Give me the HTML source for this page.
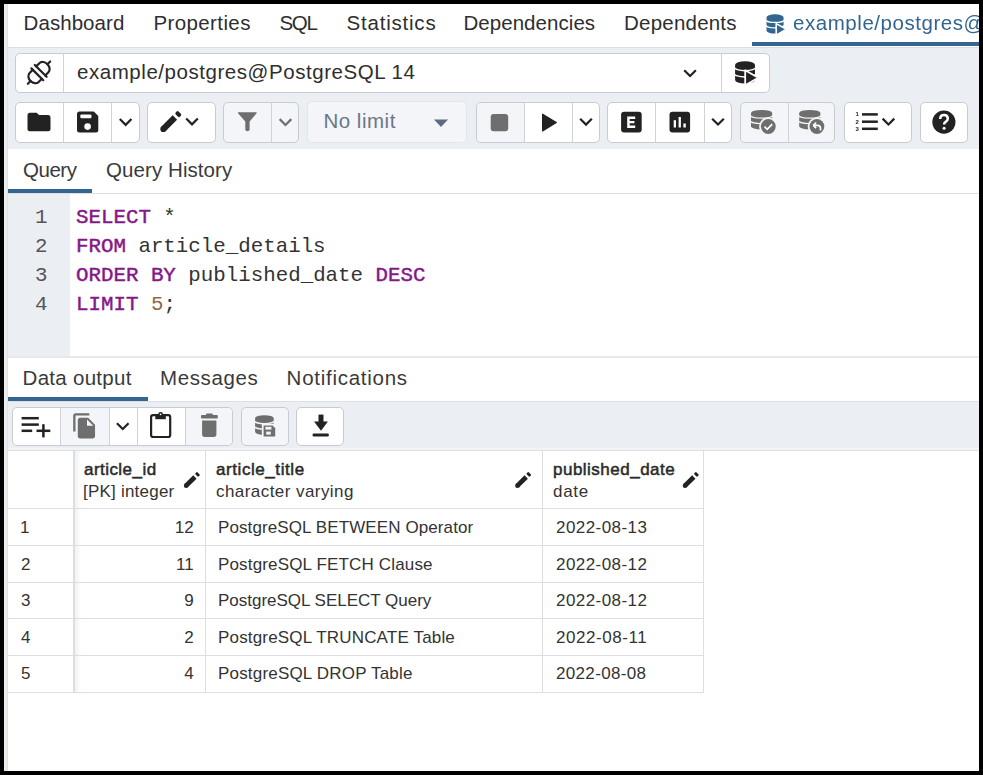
<!DOCTYPE html>
<html><head><meta charset="utf-8">
<style>
html,body{margin:0;padding:0;}
body{width:983px;height:775px;background:#000;position:relative;overflow:hidden;font-family:"Liberation Sans",sans-serif;color:#222;}
.a{position:absolute;}
.app{position:absolute;left:4px;top:4px;width:975px;height:767px;background:#fff;overflow:hidden;}
.t{position:absolute;white-space:nowrap;line-height:1;}
.hl{position:absolute;background:#dcdee2;}
.box{position:absolute;background:#fff;border:1px solid #c8cbd2;border-radius:5px;box-sizing:border-box;}
.dis{background:#f3f5f9;}
.sep{position:absolute;top:0;bottom:0;width:1px;background:#cfd2d9;}
svg{position:absolute;overflow:visible;}
.kw{color:#85178a;-webkit-text-stroke:0.45px #85178a;}
.b{font-size:17px;color:#2a2a2a;-webkit-text-stroke:0.5px #2a2a2a;}
.s{font-size:17px;color:#333;}
</style></head>
<body>
<div id="wrap" style="position:absolute;left:0;top:0;width:983px;height:775px;filter:blur(0.4px);">
<div class="app"></div>
<!-- left panel border -->
<div class="a" style="left:4px;top:4px;width:4px;height:767px;background:#eaecf0;"></div>
<div class="a" style="left:7px;top:4px;width:1px;height:767px;background:#dfe2e7;"></div>

<!-- top tab bar -->
<div class="t" id="tDash" style="left:23.6px;top:12.5px;font-size:20.5px;letter-spacing:0.05px;color:#2e2e2e;">Dashboard</div>
<div class="t" id="tProp" style="left:153.4px;top:12.5px;font-size:20.5px;letter-spacing:0.40px;color:#2e2e2e;">Properties</div>
<div class="t" id="tSql" style="left:279.4px;top:12.5px;font-size:20.5px;letter-spacing:-1.20px;color:#2e2e2e;">SQL</div>
<div class="t" id="tStat" style="left:346.6px;top:12.5px;font-size:20.5px;letter-spacing:0.78px;color:#2e2e2e;">Statistics</div>
<div class="t" id="tDep" style="left:463.4px;top:12.5px;font-size:20.5px;letter-spacing:0.06px;color:#2e2e2e;">Dependencies</div>
<div class="t" id="tDept" style="left:624.0px;top:12.5px;font-size:20.5px;letter-spacing:0.22px;color:#2e2e2e;">Dependents</div>
<div class="t" id="tEx" style="left:793.0px;top:12.5px;font-size:20.5px;color:#326690;letter-spacing:0.55px;">example/postgres@PostgreSQL 14</div>
<div class="a" style="left:752px;top:42px;width:227px;height:4px;background:#326690;"></div>
<div class="hl" style="left:8px;top:47px;width:971px;height:1px;"></div>

<!-- toolbar gray -->
<div class="a" style="left:8px;top:48px;width:971px;height:100.5px;background:#ebeef3;"></div>

<!-- connection box -->
<div class="box" style="left:15px;top:53px;width:755px;height:40px;">
  <div class="sep" style="left:47px;"></div>
  <div class="sep" style="left:705px;"></div>
</div>
<div class="t" id="tConn" style="left:77.0px;top:61.5px;font-size:20.5px;letter-spacing:0.55px;color:#2e2e2e;">example/postgres@PostgreSQL 14</div>

<!-- toolbar buttons row -->
<div class="box" style="left:15px;top:102px;width:125px;height:41px;">
  <div class="sep" style="left:47px;"></div>
  <div class="sep" style="left:95px;"></div>
</div>
<div class="box" style="left:147px;top:102px;width:69px;height:41px;"></div>
<div class="box dis" style="left:223px;top:102px;width:76px;height:41px;">
  <div class="sep" style="left:47px;"></div>
</div>
<div class="box dis" style="left:307px;top:101px;width:160px;height:42px;border-color:#e3e6eb;"></div>
<div class="t" id="tNoLim" style="left:323.4px;top:111.0px;font-size:20.5px;color:#6b7686;letter-spacing:0.52px;">No limit</div>
<div class="box" style="left:476px;top:102px;width:124px;height:41px;">
  <div class="a dis" style="left:0;top:0;width:46.5px;height:39px;border-radius:5px 0 0 5px;"></div>
  <div class="sep" style="left:46.5px;"></div>
  <div class="sep" style="left:95px;"></div>
</div>
<div class="box" style="left:607px;top:102px;width:125px;height:41px;">
  <div class="sep" style="left:47px;"></div>
  <div class="sep" style="left:96px;"></div>
</div>
<div class="box dis" style="left:740px;top:102px;width:95px;height:41px;">
  <div class="sep" style="left:47px;"></div>
</div>
<div class="box" style="left:844px;top:102px;width:68px;height:41px;"></div>
<div class="box" style="left:920px;top:102px;width:48px;height:41px;"></div>

<!-- query tabs -->
<div class="t" id="tQuery" style="left:23.0px;top:159.8px;font-size:20.5px;letter-spacing:-0.46px;color:#3a3a3a;">Query</div>
<div class="t" id="tQH" style="left:106.0px;top:159.8px;font-size:20.5px;letter-spacing:0.08px;color:#3a3a3a;">Query History</div>
<div class="a" style="left:8px;top:189px;width:84px;height:4px;background:#326690;"></div>
<div class="hl" style="left:8px;top:193px;width:971px;height:1px;"></div>

<!-- editor -->
<div class="a" style="left:8px;top:194px;width:62px;height:162px;background:#ebeef3;"></div>
<div class="a" style="left:8px;top:355.5px;width:971px;height:2px;background:#e8e9ec;"></div>

<!-- results tabs -->
<div class="t" id="tDO" style="left:22.6px;top:367.9px;font-size:20.5px;letter-spacing:0.28px;color:#3a3a3a;">Data output</div>
<div class="t" id="tMsg" style="left:160.0px;top:367.9px;font-size:20.5px;letter-spacing:0.60px;color:#3a3a3a;">Messages</div>
<div class="t" id="tNot" style="left:286.6px;top:367.9px;font-size:20.5px;letter-spacing:0.73px;color:#3a3a3a;">Notifications</div>
<div class="a" style="left:8px;top:397px;width:140px;height:4px;background:#326690;"></div>
<div class="hl" style="left:8px;top:401px;width:971px;height:1px;"></div>

<!-- results toolbar -->
<div class="a" style="left:8px;top:402px;width:971px;height:48px;background:#f2f3f6;"></div>
<div class="a" style="left:8px;top:402px;width:971px;height:46px;background:#ebeef3;"></div>
<div class="box" style="left:12px;top:407px;width:221px;height:39px;">
  <div class="a dis" style="left:47px;top:0;width:49px;height:37px;"></div>
  <div class="a dis" style="left:172px;top:0;width:47px;height:37px;border-radius:0 5px 5px 0;"></div>
  <div class="sep" style="left:47px;"></div>
  <div class="sep" style="left:96px;"></div>
  <div class="sep" style="left:123.5px;"></div>
  <div class="sep" style="left:172px;"></div>
</div>
<div class="box dis" style="left:241px;top:407px;width:48px;height:39px;"></div>
<div class="box" style="left:296px;top:407px;width:48px;height:39px;"></div>


<!-- editor text -->
<div class="a" id="edit" style="left:0;top:0;font-family:'Liberation Mono',monospace;font-size:20.8px;color:#333;">
<div class="t" style="left:35px;top:208px;color:#555;">1</div>
<div class="t" style="left:35px;top:237px;color:#555;">2</div>
<div class="t" style="left:35px;top:266px;color:#555;">3</div>
<div class="t" style="left:35px;top:295px;color:#555;">4</div>
<div class="t" id="l1" style="left:76px;top:208px;"><span class="kw">SELECT</span> *</div>
<div class="t" id="l2" style="left:76px;top:237px;"><span class="kw">FROM</span> article_details</div>
<div class="t" id="l3" style="left:76px;top:266px;"><span class="kw">ORDER</span> <span class="kw">BY</span> published_date <span class="kw">DESC</span></div>
<div class="t" id="l4" style="left:76px;top:295px;"><span class="kw">LIMIT</span> <span style="color:#91664a">5</span>;</div>
</div>

<!-- grid -->
<div class="hl" style="left:8px;top:450px;width:971px;height:1px;"></div>
<div class="a" style="left:8px;top:451px;width:696px;height:242px;">
</div>
<div class="a" style="left:75px;top:451px;width:6px;height:241px;background:linear-gradient(to right,#eff1f4,#fff);"></div>
<div class="hl" style="left:8px;top:508px;width:696px;height:1px;"></div>
<div class="hl" style="left:8px;top:545px;width:696px;height:1px;"></div>
<div class="hl" style="left:8px;top:582px;width:696px;height:1px;"></div>
<div class="hl" style="left:8px;top:618px;width:696px;height:1px;"></div>
<div class="hl" style="left:8px;top:655px;width:696px;height:1px;"></div>
<div class="hl" style="left:8px;top:692px;width:696px;height:1px;"></div>
<div class="hl" style="left:73px;top:451px;width:2px;height:242px;"></div>
<div class="hl" style="left:205px;top:451px;width:1px;height:242px;"></div>
<div class="hl" style="left:542px;top:451px;width:1px;height:242px;"></div>
<div class="hl" style="left:703px;top:451px;width:1px;height:242px;"></div>

<div class="t b" id="h1" style="left:84.0px;top:460.5px;letter-spacing:0.45px;">article_id</div>
<div class="t s" id="h1b" style="left:83.0px;top:483.3px;letter-spacing:0.22px;">[PK] integer</div>
<div class="t b" id="h2" style="left:216.0px;top:460.5px;letter-spacing:0.57px;">article_title</div>
<div class="t s" id="h2b" style="left:216.0px;top:483.3px;letter-spacing:0.44px;">character varying</div>
<div class="t b" id="h3" style="left:553.0px;top:460.5px;letter-spacing:0.49px;">published_date</div>
<div class="t s" id="h3b" style="left:553.0px;top:483.3px;letter-spacing:0.73px;">date</div>
<div class="t s" id="r0n" style="left:20.0px;top:519.0px;">1</div>
<div class="t s" id="r0i" style="right:789.4px;top:519.0px;">12</div>
<div class="t s" id="r0t" style="left:218.0px;top:519.0px;letter-spacing:0.10px;">PostgreSQL BETWEEN Operator</div>
<div class="t s" id="r0d" style="left:556.0px;top:519.0px;letter-spacing:0.44px;">2022-08-13</div>
<div class="t s" id="r1n" style="left:21.0px;top:555.5px;">2</div>
<div class="t s" id="r1i" style="right:789.4px;top:555.5px;">11</div>
<div class="t s" id="r1t" style="left:218.0px;top:555.5px;letter-spacing:0.16px;">PostgreSQL FETCH Clause</div>
<div class="t s" id="r1d" style="left:556.0px;top:555.5px;letter-spacing:0.44px;">2022-08-12</div>
<div class="t s" id="r2n" style="left:21.0px;top:591.9px;">3</div>
<div class="t s" id="r2i" style="right:789.4px;top:591.9px;">9</div>
<div class="t s" id="r2t" style="left:218.0px;top:591.9px;letter-spacing:-0.01px;">PostgreSQL SELECT Query</div>
<div class="t s" id="r2d" style="left:556.0px;top:591.9px;letter-spacing:0.44px;">2022-08-12</div>
<div class="t s" id="r3n" style="left:21.0px;top:628.5px;">4</div>
<div class="t s" id="r3i" style="right:789.4px;top:628.5px;">2</div>
<div class="t s" id="r3t" style="left:218.0px;top:628.5px;letter-spacing:0.17px;">PostgreSQL TRUNCATE Table</div>
<div class="t s" id="r3d" style="left:556.0px;top:628.5px;letter-spacing:0.55px;">2022-08-11</div>
<div class="t s" id="r4n" style="left:21.0px;top:665.1px;">5</div>
<div class="t s" id="r4i" style="right:789.4px;top:665.1px;">4</div>
<div class="t s" id="r4t" style="left:218.0px;top:665.1px;letter-spacing:0.19px;">PostgreSQL DROP Table</div>
<div class="t s" id="r4d" style="left:556.0px;top:665.1px;letter-spacing:0.33px;">2022-08-08</div>





</div>
<div style="position:absolute;left:0;top:0;width:983px;height:4px;background:#000"></div><div style="position:absolute;left:0;top:771px;width:983px;height:4px;background:#000"></div><div style="position:absolute;left:0;top:0;width:4px;height:775px;background:#000"></div><div style="position:absolute;left:979px;top:0;width:4px;height:775px;background:#000"></div>
<svg id="icons" width="983" height="775" viewBox="0 0 983 775" style="position:absolute;left:0;top:0;">
<path fill="#326690" d="M766.5,17.388 A8.55,3.088 0 0 1 783.6,17.388 V30.512 A8.55,3.088 0 0 1 766.5,30.512 Z"/>
<path fill="none" stroke="#fff" stroke-width="1.25" d="M765.5,19.395200000000003 A9.55,3.088 0 0 0 784.6,19.395200000000003"/>
<path fill="none" stroke="#fff" stroke-width="1.25" d="M765.5,24.799200000000003 A9.55,3.088 0 0 0 784.6,24.799200000000003"/>
<path fill="#326690" stroke="#fff" stroke-width="1.6" stroke-linejoin="round" d="M776.2,23.6 L786.4,29.3 L776.2,35.2 Z"/>
<g transform="translate(39,72.6) rotate(45)" fill="none" stroke="#222" stroke-width="2.2" stroke-linecap="round"><path d="M0,-15.8 V-11.9"/><path d="M-6.4,-2.4 V-6.9 A6.4,5 0 0 1 6.4,-6.9 V-2.4"/><path d="M-8.4,-2.4 H8.4"/><path d="M-8.4,2.4 H8.4"/><path d="M-6.4,2.4 V6.9 A6.4,5 0 0 0 6.4,6.9 V2.4"/><path d="M0,11.9 V15.8"/></g>
<g transform="translate(676.85,59.97) scale(1.1)"><path fill="#222" d="M16.59 8.59L12 13.17 7.41 8.59 6 10l6 6 6-6z"/></g>
<path fill="#222" d="M735.1,64.784 A9.95,3.5839999999999996 0 0 1 755.0,64.784 V80.01599999999999 A9.95,3.5839999999999996 0 0 1 735.1,80.01599999999999 Z"/>
<path fill="none" stroke="#fff" stroke-width="1.46" d="M734.1,67.1136 A10.95,3.5839999999999996 0 0 0 756.0,67.1136"/>
<path fill="none" stroke="#fff" stroke-width="1.46" d="M734.1,73.3856 A10.95,3.5839999999999996 0 0 0 756.0,73.3856"/>
<path fill="#222" stroke="#fff" stroke-width="1.8" stroke-linejoin="round" d="M745.2,70.2 L758.2,77.8 L745.2,85.4 Z"/>
<g transform="translate(25.2,108.2) scale(1.15)"><path fill="#222" d="M10 4H4c-1.1 0-1.99.9-1.99 2L2 18c0 1.1.9 2 2 2h16c1.1 0 2-.9 2-2V8c0-1.1-.9-2-2-2h-8l-2-2z"/></g>
<path fill="#222" d="M79.5,111.5 H93.8 L98.3,116 V130 Q98.3,132.5 95.8,132.5 H79.5 Q77,132.5 77,130 V114 Q77,111.5 79.5,111.5 Z"/>
<rect x="80.3" y="114.6" width="11.2" height="3.6" rx="1.2" fill="#fff"/>
<circle cx="87.6" cy="126.6" r="3.3" fill="#fff"/>
<g transform="translate(112.45,108.82) scale(1.1)"><path fill="#222" d="M16.59 8.59L12 13.17 7.41 8.59 6 10l6 6 6-6z"/></g>
<path d="M163.40,129.00 L174.90,117.50" stroke="#222" stroke-width="6.20" stroke-linecap="butt"/>
<circle cx="163.40" cy="129.00" r="3.10" fill="#222"/>
<rect x="175.30" y="112.10" width="6.00" height="4.00" rx="1.40" fill="#222" transform="rotate(45 178.30 114.10)"/>
<g transform="translate(178.80,108.37) scale(1.1)"><path fill="#222" d="M16.59 8.59L12 13.17 7.41 8.59 6 10l6 6 6-6z"/></g>
<path fill="#6e6e6e" d="M238.2,112.2 H256.4 Q257,112.6 256.6,113.2 L249.6,121.6 V129.6 Q249.6,131.3 247.5,131.3 Q245.3,131.3 245.3,129.6 V121.6 L238,113.2 Q237.6,112.6 238.2,112.2 Z"/>
<g transform="translate(272.30,108.92) scale(1.1)"><path fill="#6e6e6e" d="M16.59 8.59L12 13.17 7.41 8.59 6 10l6 6 6-6z"/></g>
<path fill="#5d6c80" d="M434,119.4 H448 L441,127 Z"/>
<rect x="490.7" y="114" width="17.5" height="17.3" rx="3" fill="#6e6e6e"/>
<path fill="#222" stroke="#222" stroke-width="1.2" stroke-linejoin="round" d="M542.6,114.2 L556.3,122.5 L542.6,130.9 Z"/>
<g transform="translate(572.80,108.57) scale(1.1)"><path fill="#222" d="M16.59 8.59L12 13.17 7.41 8.59 6 10l6 6 6-6z"/></g>
<rect x="621.1" y="111.8" width="20.6" height="20.6" rx="3" fill="#222"/>
<path fill="#fff" d="M627.2,116.5 H635.2 V118.9 H629.7 V121 H634.4 V123.3 H629.7 V125.5 H635.2 V127.9 H627.2 Z"/>
<rect x="669.5" y="111.8" width="20.6" height="20.6" rx="3" fill="#222"/>
<rect x="673.7" y="120.2" width="2.3" height="7.3" fill="#fff"/><rect x="678.6" y="117" width="2.3" height="10.5" fill="#fff"/><rect x="683.4" y="123.5" width="2.4" height="4" fill="#fff"/>
<g transform="translate(704.80,108.47) scale(1.1)"><path fill="#222" d="M16.59 8.59L12 13.17 7.41 8.59 6 10l6 6 6-6z"/></g>
<path fill="#6e6e6e" d="M751,113.02000000000001 A10.6,3.12 0 0 1 772.2,113.02000000000001 V126.28 A10.6,3.12 0 0 1 751,126.28 Z"/>
<path fill="none" stroke="#f3f5f9" stroke-width="1.27" d="M750,115.048 A11.6,3.12 0 0 0 773.2,115.048"/>
<path fill="none" stroke="#f3f5f9" stroke-width="1.27" d="M750,120.50800000000001 A11.6,3.12 0 0 0 773.2,120.50800000000001"/>
<circle cx="768.3" cy="126.5" r="9.2" fill="#f3f5f9"/>
<circle cx="768.3" cy="126.5" r="7.4" fill="#6e6e6e"/>
<path d="M764.5,126.7 L767.1999999999999,129.3 L772.1999999999999,124.1" fill="none" stroke="#fff" stroke-width="1.7"/>
<path fill="#6e6e6e" d="M799.2,113.02000000000001 A10.6,3.12 0 0 1 820.4000000000001,113.02000000000001 V126.28 A10.6,3.12 0 0 1 799.2,126.28 Z"/>
<path fill="none" stroke="#f3f5f9" stroke-width="1.27" d="M798.2,115.048 A11.6,3.12 0 0 0 821.4000000000001,115.048"/>
<path fill="none" stroke="#f3f5f9" stroke-width="1.27" d="M798.2,120.50800000000001 A11.6,3.12 0 0 0 821.4000000000001,120.50800000000001"/>
<circle cx="816.9" cy="126.5" r="9.2" fill="#f3f5f9"/>
<circle cx="816.9" cy="126.5" r="7.4" fill="#6e6e6e"/>
<path d="M813.3,125.3 L816.1,122.5 M813.3,125.3 L816.1,128.1 M813.5,125.3 H817.4 Q820.5,125.3 820.5,128.3 V130.5" fill="none" stroke="#fff" stroke-width="1.7"/>
<rect x="862" y="113.15" width="15.8" height="2.5" fill="#222"/>
<rect x="862" y="120.45" width="15.8" height="2.5" fill="#222"/>
<rect x="862" y="127.55000000000001" width="15.8" height="2.5" fill="#222"/>
<text x="857.2" y="116.3" font-size="6" font-weight="bold" text-anchor="middle" fill="#222" font-family="Liberation Sans">1</text>
<text x="857.2" y="123.6" font-size="6" font-weight="bold" text-anchor="middle" fill="#222" font-family="Liberation Sans">2</text>
<text x="857.2" y="130.9" font-size="6" font-weight="bold" text-anchor="middle" fill="#222" font-family="Liberation Sans">3</text>
<g transform="translate(875.25,108.42) scale(1.1)"><path fill="#222" d="M16.59 8.59L12 13.17 7.41 8.59 6 10l6 6 6-6z"/></g>
<circle cx="943.9" cy="122.1" r="11.6" fill="#222"/>
<path d="M940.2,118.9 Q940.2,114.9 944,114.9 Q947.8,114.9 947.8,118.5 Q947.8,120.6 945.6,121.8 Q944.1,122.6 944.1,124.6" fill="none" stroke="#fff" stroke-width="2.5"/>
<circle cx="944.1" cy="128.3" r="1.5" fill="#fff"/>
<rect x="21.6" y="416.95" width="17.2" height="2.5" fill="#222"/>
<rect x="21.6" y="423.35" width="17.2" height="2.5" fill="#222"/>
<rect x="21.6" y="429.55" width="10.6" height="2.5" fill="#222"/>
<rect x="36.5" y="429.55" width="13.8" height="2.5" fill="#222"/><rect x="42.15" y="424.2" width="2.5" height="13.2" fill="#222"/>
<g transform="translate(70.9,412.05) scale(1.15)"><path fill="#6e6e6e" d="M16 1H4c-1.1 0-2 .9-2 2v14h2V3h12V1zm-1 4l6 6v10c0 1.1-.9 2-2 2H7.99C6.89 23 6 22.1 6 21l.01-14c0-1.1.89-2 1.99-2h7zm-1 7h5.5L14 6.5V12z"/></g>
<g transform="translate(109.55,412.97) scale(1.1)"><path fill="#222" d="M16.59 8.59L12 13.17 7.41 8.59 6 10l6 6 6-6z"/></g>
<rect x="151.1" y="415.2" width="19.1" height="21.8" rx="2" fill="none" stroke="#222" stroke-width="2.2"/>
<path fill="#222" d="M155.3,415 H165.8 V419.2 H155.3 Z"/><circle cx="160.6" cy="414.3" r="2.4" fill="#222"/><circle cx="160.6" cy="414.3" r="0.9" fill="#fff"/>
<rect x="201" y="415.1" width="16.8" height="3.3" rx="1" fill="#6e6e6e"/><rect x="206" y="413.6" width="6.8" height="2.5" rx="0.8" fill="#6e6e6e"/>
<path fill="#6e6e6e" d="M202.1,420.5 H216.4 V434.3 Q216.4,437 213.7,437 H204.8 Q202.1,437 202.1,434.3 Z"/>
<path fill="#6e6e6e" d="M255.1,418.352 A9.3,3.152 0 0 1 273.7,418.352 V431.748 A9.3,3.152 0 0 1 255.1,431.748 Z"/>
<path fill="none" stroke="#f3f5f9" stroke-width="1.28" d="M254.1,420.40079999999995 A10.3,3.152 0 0 0 274.7,420.40079999999995"/>
<path fill="none" stroke="#f3f5f9" stroke-width="1.28" d="M254.1,425.91679999999997 A10.3,3.152 0 0 0 274.7,425.91679999999997"/>
<rect x="261.8" y="423.8" width="15.2" height="14.6" fill="#f3f5f9"/>
<path fill="#6e6e6e" d="M263.6,425.6 H272.6 L275.2,428.2 V436.6 H263.6 Z"/>
<rect x="265.4" y="426.8" width="6" height="2.8" fill="#f3f5f9"/><rect x="266.2" y="431.6" width="4.6" height="3" fill="#f3f5f9"/>
<rect x="318.5" y="414.6" width="5" height="8.6" fill="#222"/><path fill="#222" d="M314,421.6 H327.9 L321,430.8 Z"/>
<rect x="312.6" y="433.4" width="16.2" height="3" rx="1.2" fill="#222"/>
<path d="M186.18,485.70 L194.92,476.96" stroke="#222" stroke-width="4.71" stroke-linecap="butt"/>
<circle cx="186.18" cy="485.70" r="2.36" fill="#222"/>
<rect x="195.23" y="472.86" width="4.56" height="3.04" rx="1.06" fill="#222" transform="rotate(45 197.51 474.38)"/>
<path d="M517.48,485.70 L526.22,476.96" stroke="#222" stroke-width="4.71" stroke-linecap="butt"/>
<circle cx="517.48" cy="485.70" r="2.36" fill="#222"/>
<rect x="526.53" y="472.86" width="4.56" height="3.04" rx="1.06" fill="#222" transform="rotate(45 528.81 474.38)"/>
<path d="M685.08,485.70 L693.82,476.96" stroke="#222" stroke-width="4.71" stroke-linecap="butt"/>
<circle cx="685.08" cy="485.70" r="2.36" fill="#222"/>
<rect x="694.13" y="472.86" width="4.56" height="3.04" rx="1.06" fill="#222" transform="rotate(45 696.41 474.38)"/>
</svg>
</body></html>
